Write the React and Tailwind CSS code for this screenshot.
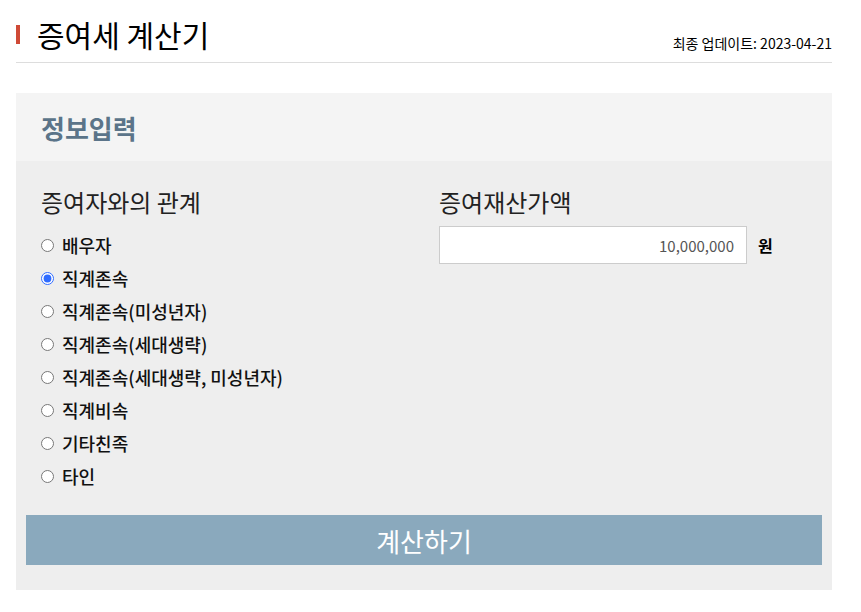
import React, { useState } from 'react';

const relations = [
    '배우자',
    '직계존속',
    '직계존속(미성년자)',
    '직계존속(세대생략)',
    '직계존속(세대생략, 미성년자)',
    '직계비속',
    '기타친족',
    '타인'
];

const font = { fontFamily: '"Noto Sans CJK KR", "Noto Sans", sans-serif' };

export default function App() {
    const [relation, setRelation] = useState('직계존속');
    const [amount, setAmount] = useState('10,000,000');

    return (
        <div className="min-h-[612px] bg-white pl-4 text-[#111]" style={font}>
            <div className="w-[816px]">
                {/* Page title */}
                <div className="flex items-end justify-between border-b border-[#dddddd] pt-[14px] pb-[8px]">
                    <div className="flex items-center">
                        <span className="mr-[17px] h-[19px] w-[4px] bg-[#cf4a36]" />
                        <h1 className="text-[30px] leading-[40px] font-normal text-black">증여세 계산기</h1>
                    </div>
                    <span className="pb-[1px] text-[14px] leading-[20px] text-black">최종 업데이트: 2023-04-21</span>
                </div>

                {/* Calculator panel */}
                <div className="mt-[30px] bg-[#eeeeee] pb-[25px]">
                    <div className="flex h-[68px] items-center bg-[#f4f4f4] pl-[25px]">
                        <h2 className="text-[26px] font-bold text-[#5b7489]">정보입력</h2>
                    </div>

                    <div className="flex px-[25px] pt-[25px]">
                        {/* Relation */}
                        <div className="w-[398px]">
                            <div className="text-[24px] leading-[32px] text-[#222]">증여자와의 관계</div>
                            <ul className="mt-[11px]">
                                {relations.map((r) => (
                                    <li key={r} className="h-[33px]">
                                        <label className="flex h-full cursor-pointer items-center gap-[8px] text-[18px] font-medium text-[#111]">
                                            <input
                                                type="radio"
                                                name="relation"
                                                checked={relation === r}
                                                onChange={() => setRelation(r)}
                                                className="m-0 h-[13px] w-[13px] accent-[#2f6bff]"
                                            />
                                            {r}
                                        </label>
                                    </li>
                                ))}
                            </ul>
                        </div>

                        {/* Amount */}
                        <div>
                            <div className="text-[24px] leading-[32px] text-[#222]">증여재산가액</div>
                            <div className="mt-[8px] flex items-center">
                                <input
                                    type="text"
                                    value={amount}
                                    onChange={(e) => setAmount(e.target.value)}
                                    className="h-[38px] w-[308px] border border-[#cccccc] bg-white px-[12px] text-right text-[15px] text-[#555] outline-none"
                                />
                                <span className="ml-[11px] text-[16px] font-bold text-black">원</span>
                            </div>
                        </div>
                    </div>

                    <div className="mt-[22px] px-[10px]">
                        <button className="h-[50px] w-full bg-[#8aa9bd] text-[26px] text-white">계산하기</button>
                    </div>
                </div>
            </div>
        </div>
    );
}
